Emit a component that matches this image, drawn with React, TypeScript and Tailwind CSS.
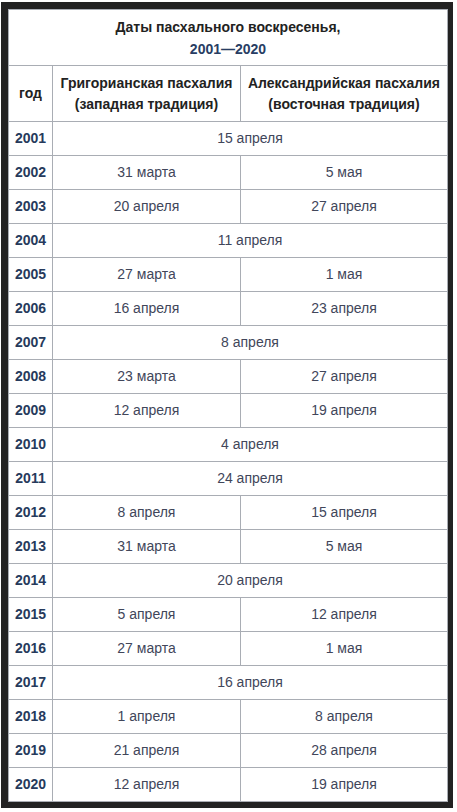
const rows: [string, string, string?][] = [
  ["2001", "15 апреля"],
  ["2002", "31 марта", "5 мая"],
  ["2003", "20 апреля", "27 апреля"],
  ["2004", "11 апреля"],
  ["2005", "27 марта", "1 мая"],
  ["2006", "16 апреля", "23 апреля"],
  ["2007", "8 апреля"],
  ["2008", "23 марта", "27 апреля"],
  ["2009", "12 апреля", "19 апреля"],
  ["2010", "4 апреля"],
  ["2011", "24 апреля"],
  ["2012", "8 апреля", "15 апреля"],
  ["2013", "31 марта", "5 мая"],
  ["2014", "20 апреля"],
  ["2015", "5 апреля", "12 апреля"],
  ["2016", "27 марта", "1 мая"],
  ["2017", "16 апреля"],
  ["2018", "1 апреля", "8 апреля"],
  ["2019", "21 апреля", "28 апреля"],
  ["2020", "12 апреля", "19 апреля"],
]

export default function App() {
  return (
    <div className="min-h-[812px] bg-white pt-[2px] pl-[1px] font-['Liberation_Sans',Arial,sans-serif]">
      <div className="w-[452px] border-[7px] border-r-[6px] border-b-[6px] border-[#222222]">
        <table className="w-[439px] table-fixed border-collapse text-[14px] text-[#41465a]">
          <colgroup>
            <col className="w-[44px]" />
            <col className="w-[188px]" />
            <col className="w-[207px]" />
          </colgroup>
          <thead>
            <tr className="h-[56px]">
              <th colSpan={3} className="border border-[#a9adb4] text-center text-[14px] font-bold leading-[22px] text-[#222]">
                Даты пасхального воскресенья,
                <br />
                <span className="text-[#283d63]">2001—2020</span>
              </th>
            </tr>
            <tr className="h-[56px]">
              <th className="border border-[#a9adb4] text-center text-[14px] font-bold text-[#222]">год</th>
              <th className="border border-[#a9adb4] text-center text-[14px] font-bold leading-[21px] text-[#222]">
                Григорианская пасхалия
                <br />
                (западная традиция)
              </th>
              <th className="border border-[#a9adb4] text-center text-[14px] font-bold leading-[21px] text-[#222]">
                Александрийская пасхалия
                <br />
                (восточная традиция)
              </th>
            </tr>
          </thead>
          <tbody>
            {rows.map(([year, a, b]) => (
              <tr key={year} className="h-[34px]">
                <td className="border border-[#a9adb4] text-center font-bold text-[#263a5c]">{year}</td>
                {b === undefined ? (
                  <td colSpan={2} className="border border-[#a9adb4] text-center">{a}</td>
                ) : (
                  <>
                    <td className="border border-[#a9adb4] text-center">{a}</td>
                    <td className="border border-[#a9adb4] text-center">{b}</td>
                  </>
                )}
              </tr>
            ))}
          </tbody>
        </table>
      </div>
    </div>
  )
}
